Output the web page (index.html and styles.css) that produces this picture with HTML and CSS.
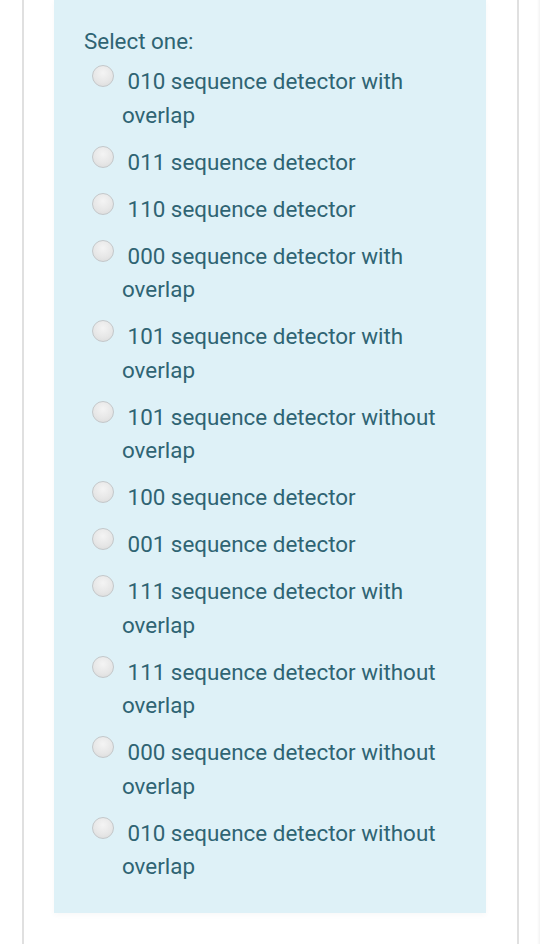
FILE: index.html
```html
<!DOCTYPE html>
<html>
<head>
<meta charset="utf-8">
<link rel="stylesheet" href="styles.css">
</head>
<body>
<div class="page">
  <div class="card">
    <div class="formulation">
      <div class="prompt">Select one:</div>
      <div class="answer">
        <div class="r"><span class="radio"></span> <span class="lbl">010 sequence detector with overlap</span></div>
        <div class="r"><span class="radio"></span> <span class="lbl">011 sequence detector</span></div>
        <div class="r"><span class="radio"></span> <span class="lbl">110 sequence detector</span></div>
        <div class="r"><span class="radio"></span> <span class="lbl">000 sequence detector with overlap</span></div>
        <div class="r"><span class="radio"></span> <span class="lbl">101 sequence detector with overlap</span></div>
        <div class="r"><span class="radio"></span> <span class="lbl">101 sequence detector without overlap</span></div>
        <div class="r"><span class="radio"></span> <span class="lbl">100 sequence detector</span></div>
        <div class="r"><span class="radio"></span> <span class="lbl">001 sequence detector</span></div>
        <div class="r"><span class="radio"></span> <span class="lbl">111 sequence detector with overlap</span></div>
        <div class="r"><span class="radio"></span> <span class="lbl">111 sequence detector without overlap</span></div>
        <div class="r"><span class="radio"></span> <span class="lbl">000 sequence detector without overlap</span></div>
        <div class="r"><span class="radio"></span> <span class="lbl">010 sequence detector without overlap</span></div>
      </div>
    </div>
  </div>
  <div class="side"></div>
</div>
</body>
</html>
```
FILE: styles.css
```css
html, body {
  margin: 0;
  padding: 0;
  background: #ffffff;
}
body {
  font-family: Roboto, "Liberation Sans", sans-serif;
  color: #2f6473;
}
.page {
  display: flex;
  height: 944px;
  overflow: hidden;
}
.card {
  margin-left: 22px;
  width: 493px;
  border-left: 2px solid #e0e0e0;
  border-right: 2px solid #e0e0e0;
  height: 944px;
}
.formulation {
  margin-left: 30px;
  width: 432px;
  height: 913px;
  box-sizing: border-box;
  background: #def1f7;
  padding: 24.5px 30px 0 30px;
  box-shadow: 0 2px 6px rgba(0,0,0,0.03);
}
.prompt {
  font-size: 22.4px;
  line-height: 33.5px;
  margin-bottom: 7px;
}
.answer .r {
  font-size: 22.4px;
  line-height: 33.5px;
  padding-left: 38px;
  text-indent: -30px;
  margin-bottom: 13.5px;
}
.radio {
  display: inline-block;
  width: 20px;
  height: 20px;
  border-radius: 50%;
  border: 1px solid #c4c8ca;
  background: radial-gradient(circle at 50% 35%, #f4f4f4 0%, #e6e6e6 60%, #d8d8d8 100%);
  vertical-align: 2px;
  margin-right: 8px;
  text-indent: 0;
  box-sizing: content-box;
}
.side {
  margin-left: 18px;
  flex: 1;
  background: linear-gradient(to right, #ffffff, #f3f3f3);
}
```
